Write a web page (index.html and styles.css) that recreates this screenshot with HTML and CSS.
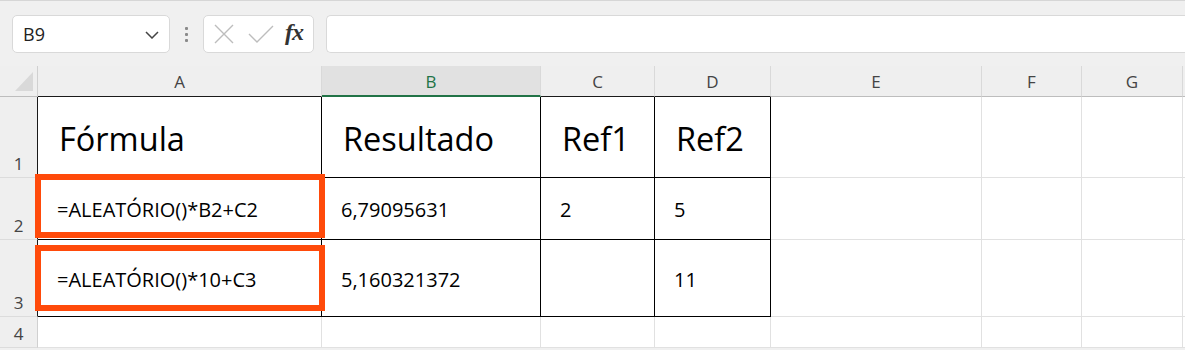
FILE: index.html
```html
<!DOCTYPE html>
<html>
  <head>
    <meta charset="utf-8">
    <title>Planilha</title>
    <link rel="stylesheet" href="styles.css">
  </head>
  <body>
    <div class="topstrip"></div>
    <div class="formulabar">
      <div class="namebox">
        <span>B9</span>
        <svg class="chev" width="14" height="8" viewBox="0 0 14 8"><path d="M1 1 L7 7 L13 1" fill="none" stroke="#444" stroke-width="1.5"/></svg>
      </div>
      <div class="dots"><i></i><i></i><i></i></div>
      <div class="fxbox">
        <svg width="20" height="20" viewBox="0 0 20 20"><path d="M1 1 L19 19 M19 1 L1 19" stroke="#bdbdbd" stroke-width="1.4" fill="none"/></svg>
        <svg width="26" height="18" viewBox="0 0 26 18"><path d="M1 9 L9 17 L25 1" stroke="#bdbdbd" stroke-width="1.4" fill="none"/></svg>
        <span class="fx">fx</span>
      </div>
      <div class="input"></div>
    </div>

    <div class="sheet">
      <!-- cabeçalho das colunas -->
      <div class="corner"><div class="tri"></div></div>
      <div class="colhead dark">A</div>
      <div class="colhead sel">B</div>
      <div class="colhead dark">C</div>
      <div class="colhead dark">D</div>
      <div class="colhead">E</div>
      <div class="colhead">F</div>
      <div class="colhead">G</div>
      <div class="colhead rest"></div>

      <!-- linha 1 -->
      <div class="rowhead bl r1">1</div>
      <div class="cell big bk">Fórmula</div>
      <div class="cell big bk">Resultado</div>
      <div class="cell big bk">Ref1</div>
      <div class="cell big bk">Ref2</div>
      <div class="cell"></div>
      <div class="cell"></div>
      <div class="cell"></div>
      <div class="cell rest"></div>

      <!-- linha 2 -->
      <div class="rowhead bl">2</div>
      <div class="cell bk mark"><span class="box box1"></span>=ALEATÓRIO()*B2+C2</div>
      <div class="cell bk">6,79095631</div>
      <div class="cell bk">2</div>
      <div class="cell bk">5</div>
      <div class="cell"></div>
      <div class="cell"></div>
      <div class="cell"></div>
      <div class="cell rest"></div>

      <!-- linha 3 -->
      <div class="rowhead bl">3</div>
      <div class="cell bk mark"><span class="box box2"></span>=ALEATÓRIO()*10+C3</div>
      <div class="cell bk">5,160321372</div>
      <div class="cell bk"></div>
      <div class="cell bk">11</div>
      <div class="cell"></div>
      <div class="cell"></div>
      <div class="cell"></div>
      <div class="cell rest"></div>

      <!-- linha 4 -->
      <div class="rowhead">4</div>
      <div class="cell"></div>
      <div class="cell"></div>
      <div class="cell"></div>
      <div class="cell"></div>
      <div class="cell"></div>
      <div class="cell"></div>
      <div class="cell"></div>
      <div class="cell rest"></div>
    </div>
  </body>
</html>
```

FILE: styles.css
```css
body {
  margin: 0;
  background: #f0f0f0;
  font-family: "Open Sans", "Noto Sans", sans-serif;
  overflow: hidden;
}
.topstrip {
  height: 1px;
  border-top: 1px solid #d6d6d6;
}
.formulabar {
  display: flex;
  align-items: center;
  height: 38px;
  margin-top: 13px;
  padding-left: 12px;
}
.namebox {
  box-sizing: border-box;
  width: 158px;
  height: 38px;
  background: #fff;
  border: 1px solid #d9d9d9;
  border-radius: 5px;
  display: flex;
  align-items: center;
  justify-content: space-between;
  padding: 0 10px 0 10px;
  font-size: 18px;
  color: #222;
}
.chev { margin-top: 1px; }
.dots {
  width: 33px;
  display: flex;
  flex-direction: column;
  align-items: center;
  gap: 3px;
}
.dots i {
  display: block;
  width: 3px;
  height: 3px;
  background: #8a8a8a;
  border-radius: 1px;
}
.fxbox {
  box-sizing: border-box;
  width: 111px;
  height: 38px;
  background: #fff;
  border: 1px solid #d9d9d9;
  border-radius: 5px;
  display: flex;
  align-items: center;
  padding-left: 10px;
  gap: 14px;
}
.fx {
  font-family: "Liberation Serif", serif;
  font-style: italic;
  font-weight: bold;
  font-size: 24px;
  color: #333;
  margin-left: -3px;
  margin-top: -3px;
  letter-spacing: -1px;
}
.input {
  flex: 1;
  height: 38px;
  box-sizing: border-box;
  margin-left: 12px;
  background: #fff;
  border: 1px solid #d9d9d9;
  border-right: none;
  border-radius: 5px 0 0 5px;
}

.sheet {
  margin-top: 13px;
  display: grid;
  grid-template-columns: 38px 284px 219px 114px 116px 211px 100px 101px 2px;
  grid-template-rows: 31px 81px 62px 77px 31px;
  background: #fff;
}
.corner {
  background: #efefef;
  border-right: 1px solid #d0d0d0;
  border-bottom: 1px solid #bdbdbd;
  position: relative;
}
.tri {
  position: absolute;
  left: 15px;
  top: 6px;
  width: 0;
  height: 0;
  border-left: 18px solid transparent;
  border-bottom: 19px solid #d9d9d9;
}
.colhead {
  background: #efefef;
  border-right: 1px solid #d9d9d9;
  border-bottom: 1px solid #bdbdbd;
  display: flex;
  align-items: center;
  justify-content: center;
  font-size: 17px;
  color: #444;
  padding-top: 1px;
  box-sizing: border-box;
}
.colhead.dark { border-bottom-color: #1a1a1a; }
.colhead.sel {
  background: #e1e1e1;
  color: #217346;
  border-bottom: 2px solid #217346;
}
.colhead.rest { border-right: none; }
.rowhead {
  background: #efefef;
  border-right: 1px solid #d0d0d0;
  border-bottom: 1px solid #dcdcdc;
  display: flex;
  align-items: flex-end;
  justify-content: center;
  padding-bottom: 2px;
  box-sizing: border-box;
  font-size: 17px;
  color: #444;
}
.rowhead.bl { border-right-color: #1a1a1a; }
.cell {
  border-right: 1px solid #e1e1e1;
  border-bottom: 1px solid #e1e1e1;
  display: flex;
  align-items: center;
  padding-left: 19px;
  padding-top: 2px;
  box-sizing: border-box;
  font-family: "Open Sans", "Noto Sans", sans-serif;
  font-size: 20px;
  color: #000;
  white-space: nowrap;
}
.cell.rest { border-right: none; padding: 0; }
.cell.bk {
  border-right-color: #000;
  border-bottom-color: #000;
}
.cell.big {
  font-size: 32.5px;
  padding-left: 21px;
  padding-top: 2px;
  padding-bottom: 0;
}
.mark { position: relative; }
.box {
  position: absolute;
  border: 6px solid #ff4a0a;
  left: -3px;
  right: -4px;
}
.box1 { top: -4px; bottom: 1px; }
.box2 { top: 5px; bottom: 5px; }
```
